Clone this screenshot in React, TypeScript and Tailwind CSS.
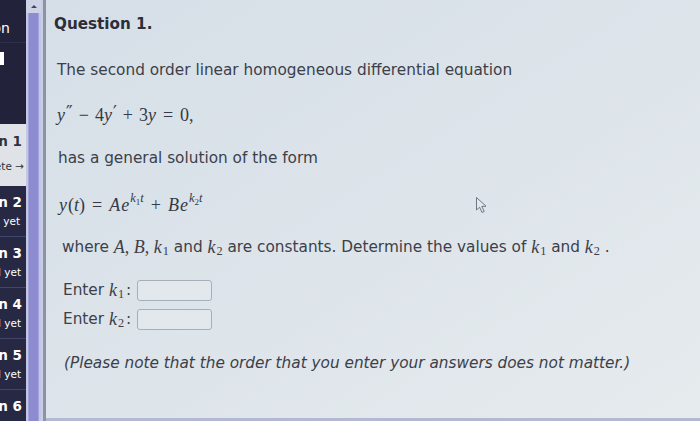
import React from 'react';

const sans = { fontFamily: '"DejaVu Sans", Verdana, sans-serif' };
const serif = { fontFamily: '"Liberation Serif", "Times New Roman", serif' };

function Sub({ children }: { children: React.ReactNode }) {
  return <span className="text-[0.68em] not-italic relative top-[0.22em] ml-[1px]">{children}</span>;
}

function K({ n }: { n: number }) {
  return (
    <span style={serif} className="text-[18px]">
      <i>k</i>
      <Sub>{n}</Sub>
    </span>
  );
}

type NavItem = { title: string; sub?: string; current?: boolean; pr: string; subPr: string };

const navItems: NavItem[] = [
  { title: 'Question 1', sub: 'Complete →', current: true, pr: 'pr-[4px]', subPr: 'pr-[2px]' },
  { title: 'Question 2', sub: 'Not answered yet', pr: 'pr-[4px]', subPr: 'pr-[6px]' },
  { title: 'Question 3', sub: 'Not answered yet', pr: 'pr-[4px]', subPr: 'pr-[5px]' },
  { title: 'Question 4', sub: 'Not answered yet', pr: 'pr-[4px]', subPr: 'pr-[5px]' },
  { title: 'Question 5', sub: 'Not answered yet', pr: 'pr-[4px]', subPr: 'pr-[5px]' },
  { title: 'Question 6', sub: 'Not answered yet', pr: 'pr-[4px]', subPr: 'pr-[5px]' },
];

function Sidebar() {
  return (
    <div style={sans} className="w-[26px] shrink-0 overflow-hidden bg-[#22233a] flex flex-col">
      {/* header */}
      <div className="h-[43px] shrink-0 flex justify-end items-end pb-[3px] pr-[16px] border-b border-[#2e2f48]">
        <span className="whitespace-nowrap text-white text-[14px]">Quiz navigation</span>
      </div>
      <div className="h-[52px] shrink-0 flex items-start pt-[9px]">
        <div className="w-[4px] h-[13px] bg-white" />
      </div>
      <div className="h-[29px] shrink-0" />
      {navItems.map((item) => (
        <div
          key={item.title}
          className={
            item.current
              ? 'h-[62px] shrink-0 bg-[#dfe3e8] text-[#2f3340] flex flex-col pt-[9px] gap-[11px]'
              : 'h-[51px] shrink-0 bg-[#272843] text-white flex flex-col pt-[8px] gap-[5px] border-b border-[#43456a]'
          }
        >
          <div className={`flex justify-end ${item.pr}`}>
            <span
              className={
                item.current
                  ? 'whitespace-nowrap text-[13.5px] font-semibold leading-[16px]'
                  : 'whitespace-nowrap text-[13.5px] font-bold leading-[16px]'
              }
            >
              {item.title}
            </span>
          </div>
          {item.sub && (
            <div className={`flex justify-end ${item.subPr}`}>
              <span className="whitespace-nowrap text-[10.5px] leading-[13px]">{item.sub}</span>
            </div>
          )}
        </div>
      ))}
    </div>
  );
}

function Scrollbar() {
  return (
    <div className="w-[20px] shrink-0 flex">
      <div className="w-[15px] bg-[#c4c7e3] flex flex-col">
        <div className="h-[13px] bg-[#cdd2e4] flex items-center justify-center">
          <div className="w-0 h-0 border-l-[3px] border-r-[3px] border-b-[3px] border-l-transparent border-r-transparent border-b-[#3d4460]" />
        </div>
        <div className="flex-1 mx-[2px] bg-[#8d8cd0] border-x border-[#a3a3dc]" />
      </div>
      <div className="w-[2px] bg-[#c9cfe2]" />
      <div className="w-[3px] bg-[#8d93a6]" />
    </div>
  );
}

function Cursor() {
  return (
    <svg
      className="absolute left-[429px] top-[196px]"
      width="14"
      height="19"
      viewBox="0 0 14 19"
      fill="none"
    >
      <path
        d="M1.5 1.5 L1.5 14 L4.6 11.2 L7 16.5 L9.2 15.5 L6.8 10.4 L11 10.2 Z"
        fill="#e4e9ee"
        stroke="#6f7683"
        strokeWidth="1"
        strokeLinejoin="round"
      />
    </svg>
  );
}

function Exp({ n }: { n: number }) {
  return (
    <span className="relative -top-[0.5em] text-[12.5px] ml-[1px]">
      <i>k</i>
      <span className="text-[9px] relative top-[0.25em]">{n}</span>
      <i>t</i>
    </span>
  );
}

function Prime({ count }: { count: number }) {
  return (
    <span
      style={{ fontFamily: '"DejaVu Sans", sans-serif' }}
      className="relative -top-[0.12em] text-[17px] leading-none tracking-[-1px] ml-[1px] mr-[1px]"
    >
      {count === 2 ? '′′' : '′'}
    </span>
  );
}

function Question() {
  return (
    <div
      style={sans}
      className="relative flex-1 h-[421px] bg-gradient-to-br from-[#d6dfe8] via-[#dde4ea] to-[#e6ebee] border-b-[3px] border-[#b3b8d3] text-[#3b4049] pt-[12px] pl-[8px]"
    >
      <div className="h-[24px] flex items-center">
        <h1 className="text-[15.2px] font-bold text-[#2b2e39]">Question 1.</h1>
      </div>

      <div className="mt-[22px] h-[24px] flex items-center pl-[3px] text-[15.3px]">
        The second order linear homogeneous differential equation
      </div>

      <div style={serif} className="mt-[21px] h-[24px] flex items-center pl-[3px] text-[18px] text-[#353a44]">
        <i>y</i>
        <Prime count={2} />
        <span className="mx-[6px]">−</span>
        <span>4</span>
        <i>y</i>
        <Prime count={1} />
        <span className="mx-[6px]">+</span>
        <span>3</span>
        <i>y</i>
        <span className="mx-[7px]">=</span>
        <span>0,</span>
      </div>

      <div className="mt-[19px] h-[24px] flex items-center pl-[4px] text-[15.3px]">
        has a general solution of the form
      </div>

      <div style={serif} className="mt-[23px] h-[24px] flex items-center pl-[5px] text-[18px] text-[#353a44]">
        <i>y</i>
        <span className="ml-[1px]">(</span>
        <i>t</i>
        <span>)</span>
        <span className="mx-[7px]">=</span>
        <i>A</i>
        <i className="ml-[1px]">e</i>
        <Exp n={1} />
        <span className="mx-[7px]">+</span>
        <i>B</i>
        <i className="ml-[1px]">e</i>
        <Exp n={2} />
      </div>

      <div className="mt-[18px] h-[24px] flex items-center pl-[8px] text-[15.3px] whitespace-nowrap">
        <span>where&nbsp;</span>
        <span style={serif} className="text-[18px]">
          <i>A</i>,&nbsp;<i>B</i>,&nbsp;
        </span>
        <K n={1} />
        <span>&nbsp;and&nbsp;</span>
        <K n={2} />
        <span>&nbsp;are constants. Determine the values of&nbsp;</span>
        <K n={1} />
        <span>&nbsp;and&nbsp;</span>
        <K n={2} />
        <span>&nbsp;.</span>
      </div>

      <div className="mt-[19px] h-[24px] flex items-center pl-[9px] text-[15.3px]">
        <span>Enter&nbsp;</span>
        <K n={1} />
        <span className="ml-[2px]">:</span>
        <input className="ml-[6px] w-[75px] h-[21px] rounded-[3px] border border-[#a7afb8] bg-[#e3e8ec] outline-none" />
      </div>

      <div className="mt-[5px] h-[24px] flex items-center pl-[9px] text-[15.3px]">
        <span>Enter&nbsp;</span>
        <K n={2} />
        <span className="ml-[2px]">:</span>
        <input className="ml-[6px] w-[75px] h-[21px] rounded-[3px] border border-[#a7afb8] bg-[#e3e8ec] outline-none" />
      </div>

      <div className="mt-[20px] h-[24px] flex items-center pl-[10px] text-[15.3px] italic">
        (Please note that the order that you enter your answers does not matter.)
      </div>

      <Cursor />
    </div>
  );
}

export default function App() {
  return (
    <div className="w-[700px] h-[421px] overflow-hidden flex bg-[#d0d4e4]">
      <Sidebar />
      <Scrollbar />
      <Question />
    </div>
  );
}
